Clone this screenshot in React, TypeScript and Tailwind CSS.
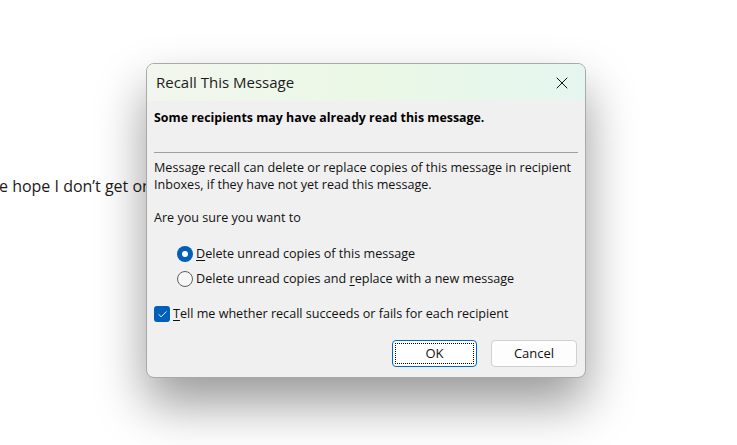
import { X, Check } from "lucide-react";

const font = { fontFamily: '"Open Sans", "Noto Sans", sans-serif' };

function Radio({ on }: { on?: boolean }) {
	return on ? (
		<span className="w-[16px] h-[16px] rounded-full bg-[#005fb8] flex items-center justify-center shrink-0">
			<span className="w-[6px] h-[6px] rounded-full bg-white" />
		</span>
	) : (
		<span className="w-[16px] h-[16px] rounded-full border border-[#5f5f5f] bg-[#f7f7f7] shrink-0" />
	);
}

export default function App() {
	return (
		<div className="relative w-[737px] h-[445px] bg-white overflow-hidden" style={font}>
			<p className="pt-[174px] text-[16px] text-[#1b1b1b] whitespace-nowrap -ml-[1px]">
				e hope I don’t get on
			</p>

			<div className="absolute left-[146px] top-[63px] w-[440px] h-[315px] rounded-[8px] border border-[#a9a9a9] bg-[#f0f0f0] overflow-hidden shadow-[0_26px_50px_rgba(0,0,0,0.4)]">
				<div className="h-[37px] flex items-center justify-between pl-[9px] pr-[13px] bg-gradient-to-r from-[#f2f6ee] via-[#ebf8e6] to-[#e4f6ef]">
					<span className="text-[15px] text-[#1c1c1c]">Recall This Message</span>
					<X size={20} strokeWidth={1.2} className="text-[#111]" />
				</div>

				<div className="px-[7px] text-[12.6px] text-[#111]">
					<p className="font-bold text-black pt-[8px] leading-[18px] text-[12.4px]">
						Some recipients may have already read this message.
					</p>
					<div className="mt-[25px] border-t border-[#a0a0a0]" />
					<p className="mt-[6px] leading-[17px]">
						Message recall can delete or replace copies of this message in recipient
						<br />
						Inboxes, if they have not yet read this message.
					</p>
					<p className="mt-[16px] leading-[17px]">Are you sure you want to</p>

					<div className="mt-[20px] pl-[23px] flex flex-col gap-[9px]">
						<label className="flex items-center gap-[3px] leading-[16px]">
							<Radio on />
							<span>
								<span className="underline underline-offset-2">D</span>elete unread copies of this message
							</span>
						</label>
						<label className="flex items-center gap-[3px] leading-[16px]">
							<Radio />
							<span>
								Delete unread copies and <span className="underline underline-offset-2">r</span>eplace with a new message
							</span>
						</label>
					</div>

					<label className="mt-[19px] flex items-center gap-[3px] leading-[16px]">
						<span className="w-[16px] h-[16px] rounded-[3px] bg-[#005fb8] flex items-center justify-center shrink-0">
							<Check size={11} strokeWidth={2} className="text-white" />
						</span>
						<span>
							<span className="underline underline-offset-2">T</span>ell me whether recall succeeds or fails for each recipient
						</span>
					</label>

					<div className="mt-[18px] flex justify-end gap-[14px] pr-[1px]">
						<button className="w-[85px] h-[27px] rounded-[4px] border border-[#0067c0] bg-white p-[2px]">
							<span className="flex w-full h-full items-center justify-center border border-dotted border-black text-[13px]">
								OK
							</span>
						</button>
						<button className="w-[86px] h-[27px] rounded-[4px] border border-[#d0d0d0] bg-[#fdfdfd] text-[13px]">
							Cancel
						</button>
					</div>
				</div>
			</div>
		</div>
	);
}
